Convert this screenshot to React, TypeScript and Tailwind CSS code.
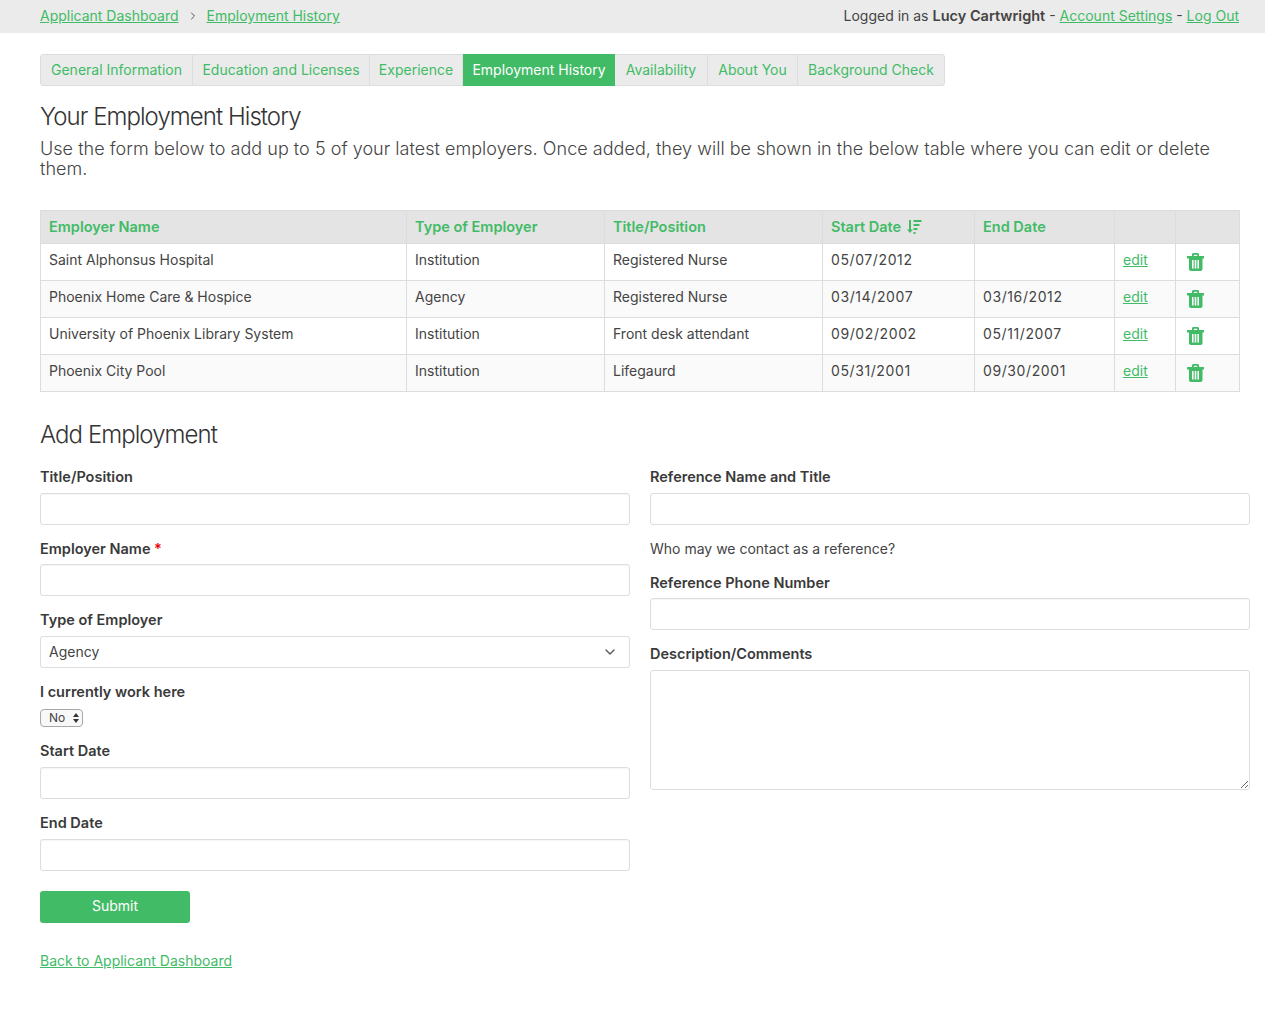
import { ChevronRight, ChevronDown } from "lucide-react";

const tabs = [
  { label: "General Information", width: "w-[152px]" },
  { label: "Education and Licenses", width: "w-[177px]" },
  { label: "Experience", width: "w-[93px]" },
  { label: "Employment History", width: "w-[152px]", active: true },
  { label: "Availability", width: "w-[93px]" },
  { label: "About You", width: "w-[90px]" },
  { label: "Background Check", width: "w-[146px]" },
];

const rows = [
  ["Saint Alphonsus Hospital", "Institution", "Registered Nurse", "05/07/2012", ""],
  ["Phoenix Home Care & Hospice", "Agency", "Registered Nurse", "03/14/2007", "03/16/2012"],
  ["University of Phoenix Library System", "Institution", "Front desk attendant", "09/02/2002", "05/11/2007"],
  ["Phoenix City Pool", "Institution", "Lifegaurd", "05/31/2001", "09/30/2001"],
];

function SortIcon() {
  return (
    <svg width="15" height="15" viewBox="0 0 15 15" className="inline-block ml-[6px] -mt-[2px] text-[#42bb67]" fill="currentColor">
      <rect x="2" y="0" width="2" height="10" />
      <path d="M0 9.500h6l-3 3.500z" />
      <rect x="6.500" y="0" width="8" height="2" />
      <rect x="6.500" y="4" width="6" height="2" />
      <rect x="6.500" y="8" width="4" height="2" />
      <rect x="6.500" y="12" width="2" height="2" />
    </svg>
  );
}

function TrashIcon() {
  return (
    <svg width="17" height="18" viewBox="0 0 17 18" className="text-[#42bb67]" fill="currentColor">
      <path d="M5 3V1.500C5 .7 5.700 0 6.500 0h4C11.300 0 12 .7 12 1.500V3h4.500c.3 0 .5.2.5.5V5.500h-1.500V16c0 1.100-.9 2-2 2H4c-1.100 0-2-.9-2-2V5.500H0v-2c0-.3.2-.5.5-.5zM6.800 3h3.400V1.800H6.800zM5 7v8.500h1.600V7zM7.700 7v8.500h1.600V7zM10.400 7v8.500H12V7z" fillRule="evenodd" />
    </svg>
  );
}

function TextField({ label, required, labelMb = "mb-[6px]" }: { label: string; required?: boolean; labelMb?: string }) {
  return (
    <div className="mb-[14px]">
      <div className={`h-[20px] leading-[20px] ${labelMb} text-[14.5px] font-semibold text-[#3a3a3a]`}>
        {label}
        {required && <span className="text-red-600"> *</span>}
      </div>
      <input type="text" className="block w-full h-[32px] rounded-[3px] border border-[#dddddd] bg-white shadow-[inset_0_1px_1px_rgba(0,0,0,0.04)]" />
    </div>
  );
}

export default function App() {
  return (
    <div className="min-h-[1029px] bg-white text-[#444444] font-['Inter','Liberation_Sans',sans-serif] text-[14px]">
      <div className="flex items-center justify-between h-[33px] bg-[#ebebeb] pl-[40px] pr-[26px] pb-[2px]">
        <div className="flex items-center">
          <a href="#" className="text-[#42bb67] underline">Applicant Dashboard</a>
          <ChevronRight size={12} className="mx-[8px] text-[#555555]" />
          <a href="#" className="text-[#42bb67] underline">Employment History</a>
        </div>
        <div>
          Logged in as <b className="text-[14.5px] font-semibold">Lucy Cartwright</b> -{" "}
          <a href="#" className="text-[#42bb67] underline">Account Settings</a> -{" "}
          <a href="#" className="text-[#42bb67] underline">Log Out</a>
        </div>
      </div>

      <div className="px-[40px] pt-[21px]">
        <div className="flex w-[905px] h-[32px] rounded-[3px] border border-[#dddddd] bg-[#ebebeb]">
          {tabs.map((t) => (
            <a
              key={t.label}
              href="#"
              className={`${t.width} flex items-center justify-center -my-px pb-[2px] ${
                t.active ? "bg-[#42bb67] text-white" : "text-[#42bb67] border-r border-[#dddddd] last:border-r-0"
              }`}
            >
              {t.label}
            </a>
          ))}
        </div>

        <h1 className="mt-[16px] text-[24px] leading-[30px] font-light text-[#333333] tracking-[-0.95px]">Your Employment History</h1>
        <p className="mt-[7px] w-[1190px] text-[18px] leading-[20px] font-light text-[#444444] tracking-[0.03px]">
          Use the form below to add up to 5 of your latest employers. Once added, they will be shown in the below table where you can edit or delete them.
        </p>

        <table className="mt-[31px] w-[1199px] table-fixed border-collapse border border-[#dddddd]">
          <colgroup>
            <col className="w-[366px]" />
            <col className="w-[198px]" />
            <col className="w-[218px]" />
            <col className="w-[152px]" />
            <col className="w-[140px]" />
            <col className="w-[61px]" />
            <col className="w-[64px]" />
          </colgroup>
          <thead>
            <tr className="h-[33px] bg-[#e4e4e4] text-left text-[14.5px] text-[#42bb67] font-semibold">
              <th className="border border-[#dddddd] px-[8px] font-semibold">Employer Name</th>
              <th className="border border-[#dddddd] px-[8px] font-semibold">Type of Employer</th>
              <th className="border border-[#dddddd] px-[8px] font-semibold">Title/Position</th>
              <th className="border border-[#dddddd] px-[8px] font-semibold">
                Start Date
                <SortIcon />
              </th>
              <th className="border border-[#dddddd] px-[8px] font-semibold">End Date</th>
              <th className="border border-[#dddddd]"></th>
              <th className="border border-[#dddddd]"></th>
            </tr>
          </thead>
          <tbody>
            {rows.map((r, i) => (
              <tr key={r[0]} className={`h-[37px] ${i % 2 === 1 ? "bg-[#fafafa]" : "bg-white"}`}>
                {r.map((c, j) => (
                  <td key={j} className={`border border-[#dddddd] px-[8px] pb-[6px] ${j >= 3 ? "tracking-[0.6px]" : ""}`}>{c}</td>
                ))}
                <td className="border border-[#dddddd] px-[8px] pb-[6px]">
                  <a href="#" className="text-[#42bb67] underline">edit</a>
                </td>
                <td className="border border-[#dddddd] pl-[11px]">
                  <TrashIcon />
                </td>
              </tr>
            ))}
          </tbody>
        </table>

        <h2 className="mt-[28px] text-[24px] leading-[30px] font-light text-[#333333] tracking-[-0.95px]">Add Employment</h2>

        <div className="mt-[17px] flex gap-[20px]">
          <div className="w-[590px] shrink-0">
            <TextField label="Title/Position" />
            <TextField label="Employer Name" required labelMb="mb-[5px]" />
            <div className="mb-[14px]">
              <div className="h-[20px] leading-[20px] mb-[6px] text-[14.5px] font-semibold text-[#3a3a3a]">Type of Employer</div>
              <div className="flex items-center justify-between h-[32px] pl-[8px] pr-[11px] rounded-[3px] border border-[#dddddd] bg-white">
                <span className="pb-[2px]">Agency</span>
                <ChevronDown size={16} className="text-[#555555]" />
              </div>
            </div>
            <div className="mb-[14px]">
              <div className="h-[20px] leading-[20px] mb-[7px] text-[14.5px] font-semibold text-[#3a3a3a]">I currently work here</div>
              <div className="flex items-center justify-between w-[43px] h-[18px] pl-[8px] pr-[3px] rounded-[4px] border border-[#a8a8a8] bg-[#f8f8f8] text-[12px] text-[#444444]">
                <span>No</span>
                <svg width="6" height="10" viewBox="0 0 6 10" fill="#333333">
                  <path d="M3 0l3 4H0zM3 10L0 6h6z" />
                </svg>
              </div>
            </div>
            <TextField label="Start Date" />
            <TextField label="End Date" />
            <button className="block mt-[20px] w-[150px] h-[32px] pb-[3px] rounded-[3px] bg-[#42bb67] text-white">Submit</button>
            <a href="#" className="inline-block mt-[28px] text-[#42bb67] underline leading-[20px]">Back to Applicant Dashboard</a>
          </div>

          <div className="w-[600px] shrink-0">
            <div className="mb-[14px]">
              <div className="h-[20px] leading-[20px] mb-[6px] text-[14.5px] font-semibold text-[#3a3a3a]">Reference Name and Title</div>
              <input type="text" className="block w-full h-[32px] rounded-[3px] border border-[#dddddd] bg-white" />
            </div>
            <p className="h-[20px] leading-[20px] mb-[14px]">Who may we contact as a reference?</p>
            <TextField label="Reference Phone Number" labelMb="mb-[5px]" />
            <div>
              <div className="h-[20px] leading-[20px] mb-[6px] text-[14.5px] font-semibold text-[#3a3a3a]">Description/Comments</div>
              <textarea className="block w-full h-[120px] rounded-[3px] border border-[#dddddd] bg-white" />
            </div>
          </div>
        </div>
      </div>
    </div>
  );
}
